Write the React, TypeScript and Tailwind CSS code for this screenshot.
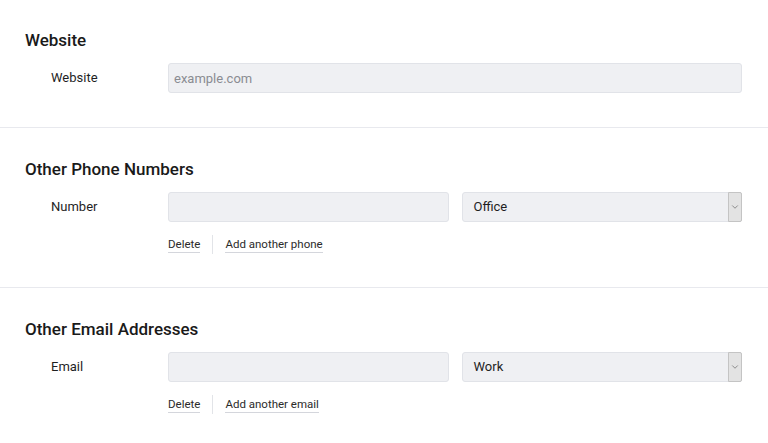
import { ChevronDown } from 'lucide-react';

function LinkRow({ addLabel }: { addLabel: string }) {
  return (
    <div className="mt-[13px] flex items-center text-[11.5px] text-[#2b2b2b]">
      <a className="border-b border-[#d4d6dc] leading-[15px] cursor-pointer">Delete</a>
      <span className="mx-3 h-[19px] w-px bg-[#e2e4e8]" />
      <a className="border-b border-[#d4d6dc] leading-[15px] cursor-pointer">{addLabel}</a>
    </div>
  );
}

function SelectBox({ value }: { value: string }) {
  return (
    <div className="flex h-[30px] items-stretch rounded-[3px] border border-[#e1e3e8] bg-[#eff0f3]">
      <div className="flex flex-1 items-center px-[11px] text-[13px] text-[#1f1f1f]">{value}</div>
      <div className="flex w-[14px] items-center justify-center rounded-r-[2px] border border-[#c4c4c4] bg-[#e3e3e3] -my-px -mr-px">
        <ChevronDown size={10} strokeWidth={2} className="text-[#7a7a7a]" />
      </div>
    </div>
  );
}

function TextBox({ placeholder }: { placeholder?: string }) {
  return (
    <input
      placeholder={placeholder}
      className="h-[30px] w-full rounded-[3px] border border-[#e1e3e8] bg-[#eff0f3] px-[5px] text-[13px] text-[#1f1f1f] placeholder-[#8a8c92] outline-none"
    />
  );
}

function Section({
  title,
  children,
  first,
  last,
}: {
  title: string;
  children: React.ReactNode;
  first?: boolean;
  last?: boolean;
}) {
  return (
    <section
      className={`pl-[25px] pr-[26px] ${first ? 'pt-[28px] pb-[34px]' : 'pt-[29px] pb-[33px]'} ${
        last ? '' : 'border-b border-[#e8e9ee]'
      }`}
    >
      <h2 className="text-[17px] leading-6 font-medium text-[#1a1a1a]">{title}</h2>
      <div className="mt-[11px]">{children}</div>
    </section>
  );
}

export default function App() {
  return (
    <div className="min-h-screen bg-white" style={{ fontFamily: 'Roboto, "Liberation Sans", sans-serif' }}>
      <Section title="Website" first>
        <div className="grid grid-cols-[143px_1fr] items-center">
          <label className="pl-[26px] text-[13px] text-[#1f1f1f]">Website</label>
          <TextBox placeholder="example.com" />
        </div>
      </Section>

      <Section title="Other Phone Numbers">
        <div className="grid grid-cols-[143px_1fr] items-center">
          <label className="pl-[26px] text-[13px] text-[#1f1f1f]">Number</label>
          <div className="grid grid-cols-2 gap-[13px]">
            <TextBox />
            <SelectBox value="Office" />
          </div>
          <div />
          <LinkRow addLabel="Add another phone" />
        </div>
      </Section>

      <Section title="Other Email Addresses" last>
        <div className="grid grid-cols-[143px_1fr] items-center">
          <label className="pl-[26px] text-[13px] text-[#1f1f1f]">Email</label>
          <div className="grid grid-cols-2 gap-[13px]">
            <TextBox />
            <SelectBox value="Work" />
          </div>
          <div />
          <LinkRow addLabel="Add another email" />
        </div>
      </Section>
    </div>
  );
}
